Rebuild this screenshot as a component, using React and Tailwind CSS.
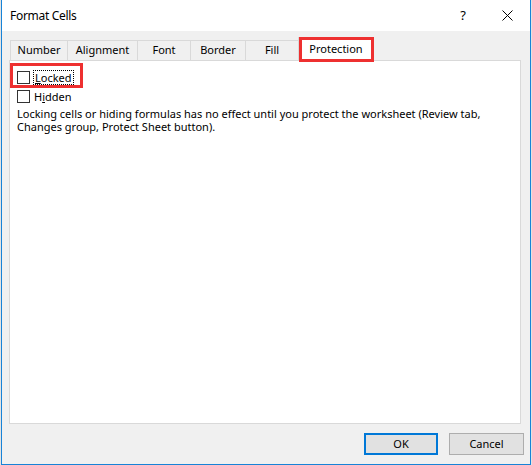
import React from 'react';

const font = { fontFamily: '"Noto Sans", "Open Sans", sans-serif' };

function Tab({ label, w, active }) {
  if (active) {
    return (
      <div className={`relative z-10 -mb-px -ml-px h-[24px] ${w} bg-white border border-b-0 border-[#d9d9d9] flex items-center justify-center text-[11px] text-black`}>
        {label}
      </div>
    );
  }
  return (
    <div className={`-ml-px first:ml-0 h-[20px] ${w} bg-[#f0f0f0] border border-b-0 border-[#d9d9d9] flex items-center justify-center text-[11px] text-black`}>
      {label}
    </div>
  );
}

function Checkbox() {
  return <span className="w-[13px] h-[13px] border border-[#333333] bg-white shrink-0"></span>;
}

export default function App() {
  return (
    <div className="relative w-[532px] h-[465px] bg-[#e3e3e3] overflow-hidden" style={font}>
      <div className="ml-px w-[530px] h-[465px] border-l border-r border-b border-[#1883d7] bg-[#f0f0f0] flex flex-col">
        {/* title bar */}
        <div className="h-[31px] bg-white flex items-center justify-between pl-[8px] pr-[17px] shrink-0">
          <span className="text-[12px] tracking-[-0.3px] text-black leading-none">Format Cells</span>
          <div className="flex items-center gap-[36px]">
            <span className="text-[13px] text-black leading-none">?</span>
            <svg width="11" height="11" viewBox="0 0 11 11" className="text-black">
              <path d="M0.5 0.5 L10.5 10.5 M10.5 0.5 L0.5 10.5" stroke="currentColor" strokeWidth="1" fill="none" />
            </svg>
          </div>
        </div>

        {/* tabs */}
        <div className="pt-[6px] pl-[8px] h-[29px] flex items-end shrink-0">
          <Tab label="Number" w="w-[58px]" />
          <Tab label="Alignment" w="w-[71px]" />
          <Tab label="Font" w="w-[54px]" />
          <Tab label="Border" w="w-[56px]" />
          <Tab label="Fill" w="w-[54px]" />
          <Tab label="Protection" w="w-[76px]" active />
        </div>

        {/* panel */}
        <div className="ml-[7px] w-[512px] h-[364px] bg-white border border-[#d9d9d9] shrink-0 pt-[9px] pl-[7px] text-[11px] text-black">
          <div className="flex items-center gap-[3px] h-[15px]">
            <Checkbox />
            <span className="px-px border border-dotted border-black leading-[13px]"><span className="underline">L</span>ocked</span>
          </div>
          <div className="flex items-center gap-[4px] h-[15px] mt-[4px]">
            <Checkbox />
            <span className="leading-[13px]">H<span className="underline">i</span>dden</span>
          </div>
          <p className="mt-[3px] leading-[13px] pr-[8px]">
            Locking cells or hiding formulas has no effect until you protect the worksheet (Review tab,
            Changes group, Protect Sheet button).
          </p>
        </div>

        {/* buttons */}
        <div className="flex justify-end gap-[11px] pr-[6px] mt-[9px]">
          <button className="w-[74px] h-[22px] bg-[#e1e1e1] border-2 border-[#0078d7] text-[11px] text-black flex items-center justify-center">OK</button>
          <button className="w-[75px] h-[22px] bg-[#e1e1e1] border border-[#adadad] text-[11px] text-black flex items-center justify-center">Cancel</button>
        </div>
      </div>

      {/* annotation boxes */}
      <div className="absolute left-[299px] top-[37px] w-[75px] h-[25px] border-[3px] border-[#ee3030] z-20"></div>
      <div className="absolute left-[10px] top-[63px] w-[73px] h-[25px] border-[3px] border-[#ee3030] z-20"></div>
    </div>
  );
}
